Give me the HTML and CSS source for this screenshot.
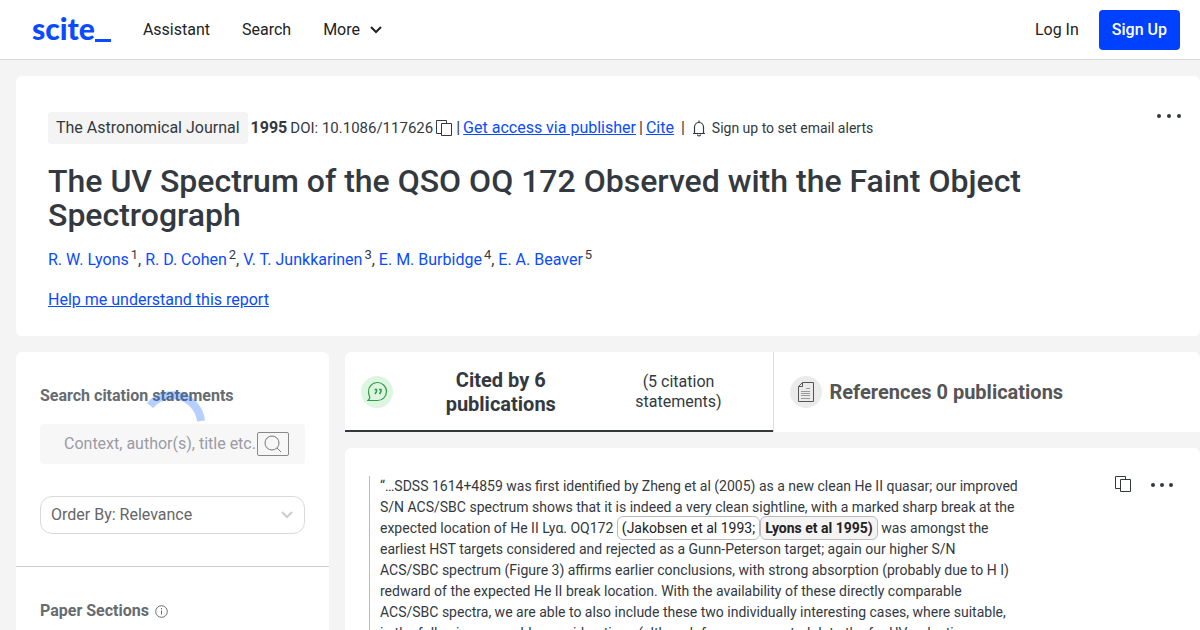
FILE: index.html
```html
<!DOCTYPE html>
<html lang="en">
<head>
    <meta charset="UTF-8">
    <meta name="viewport" content="width=device-width, initial-scale=1.0">
    <title>The UV Spectrum of the QSO OQ 172 Observed with the Faint Object Spectrograph</title>
    <link rel="stylesheet" href="styles.css">
</head>
<body>
    <header class="navbar">
        <a class="logo" href="#">scite<span class="logo-bar"></span></a>
        <nav class="nav-links">
            <a href="#">Assistant</a>
            <a href="#">Search</a>
            <button class="more-button" type="button">More
                <svg width="12" height="8" viewBox="0 0 12 8" fill="none" stroke="currentColor" stroke-width="2"><path d="M1 1l5 5 5-5"/></svg>
            </button>
        </nav>
        <div class="nav-actions">
            <a href="#">Log In</a>
            <a class="signup" href="#">Sign Up</a>
        </div>
    </header>

    <main class="page">
        <section class="card paper">
            <div class="paper-top">
                <div class="meta">
                    <span class="journal">The Astronomical Journal</span>
                    <strong>1995</strong>
                    <span class="doi">DOI: 10.1086/117626</span>
                    <button class="copy-doi" type="button" aria-label="Copy DOI">
                        <svg width="17" height="17" viewBox="0 0 17 17" fill="none" stroke="currentColor"><path d="M5.500 13.500H.5V.5h10v3M5.500 3.500h10v12h-10z"/></svg>
                    </button>
                    <span>|</span>
                    <a class="link publisher" href="#">Get access via publisher</a>
                    <span>|</span>
                    <a class="link cite" href="#">Cite</a>
                    <span>|</span>
                    <button class="alert-button" type="button">
                        <svg width="14" height="17" viewBox="0 0 14 17" fill="none" stroke="currentColor" stroke-width="1.200"><path d="M1 13.500h12M2.500 13.500V7a4.500 4.500 0 0 1 9 0v6.500M7 .5v2"/><path d="M5.500 14.500a1.500 1.500 0 0 0 3 0"/></svg>
                        Sign up to set email alerts
                    </button>
                </div>
                <button class="icon-button" type="button" aria-label="More options">
                    <svg width="26" height="8" viewBox="0 0 26 8" fill="currentColor"><circle cx="3" cy="4" r="2"/><circle cx="13" cy="4" r="2"/><circle cx="23" cy="4" r="2"/></svg>
                </button>
            </div>
            <h1>The UV Spectrum of the QSO OQ 172 Observed with the Faint Object Spectrograph</h1>
            <p class="authors">
                <a href="#">R. W. Lyons</a><sup>1</sup>, <a href="#">R. D. Cohen</a><sup>2</sup>, <a href="#">V. T. Junkkarinen</a><sup>3</sup>, <a href="#">E. M. Burbidge</a><sup>4</sup>, <a href="#">E. A. Beaver</a><sup>5</sup>
            </p>
            <a class="link help" href="#">Help me understand this report</a>
        </section>

        <div class="columns">
            <aside class="card sidebar">
                <div class="filters">
                    <label class="filter-title" for="statement-search">Search citation statements</label>
                    <div class="search-box">
                        <input type="text" id="statement-search" placeholder="Context, author(s), title etc.">
                        <button class="search-button" type="button" aria-label="Search">
                            <svg width="18" height="18" viewBox="0 0 18 18" fill="none" stroke="currentColor"><circle cx="8" cy="8" r="7"/><path d="M13 13l4 4"/></svg>
                        </button>
                    </div>
                    <div class="order-box">
                        <select class="order" aria-label="Order">
                            <option>Order By: Relevance</option>
                            <option>Order By: Recency</option>
                        </select>
                        <svg class="order-arrow" width="12" height="8" viewBox="0 0 12 8" fill="none" stroke="currentColor" stroke-width="2"><path d="M1 1l5 5 5-5"/></svg>
                    </div>
                </div>
                <div class="sections">
                    <h2 class="filter-title">Paper Sections</h2>
                    <svg width="13" height="13" viewBox="0 0 13 13" fill="none" stroke="currentColor"><circle cx="6.500" cy="6.500" r="5.800"/><path d="M6.500 5.500v4M6.500 3v1.300"/></svg>
                </div>
                <svg class="spinner" width="66" height="66" viewBox="0 0 66 66" fill="none" stroke="#0f65ff" stroke-width="8"><path d="M10 15.500A29 29 0 0 1 61 31"/></svg>
            </aside>

            <div class="results">
                <div class="tabs">
                    <button class="tab active" type="button">
                        <svg class="badge green" width="32" height="32" viewBox="0 0 32 32" fill="none" stroke="currentColor" stroke-width="1.200"><path d="M7 24.500h9.500a9 9 0 1 0-9-8.500c0 3 1.300 4.300 1.300 5.500 0 1-.8 2-1.800 3z"/><path stroke-width="1.500" d="M13.500 13.500h2v2l-1.500 2.500M18 13.500h2v2L18.500 18"/></svg>
                        <span class="tab-title">Cited by 6 publications</span>
                        <span class="tab-note">(5 citation statements)</span>
                    </button>
                    <button class="tab" type="button">
                        <svg class="badge grey" width="32" height="32" viewBox="0 0 32 32" fill="none" stroke="currentColor"><path d="M12.500 6.500h11v19h-15v-15zM12.500 6.500v4h-4"/><path stroke="#999" d="M16 12.500h4M11 15.500h9M11 17.500h9M11 19.500h9M11 22.500h9"/></svg>
                        <span class="tab-title">References 0 publications</span>
                    </button>
                </div>

                <article class="card statement">
                    <blockquote>
                        “…SDSS 1614+4859 was first identified by Zheng et al (2005) as a new clean He II quasar; our improved<br>
                        S/N ACS/SBC spectrum shows that it is indeed a very clean sightline, with a marked sharp break at the<br>
                        expected location of He II Lyα. OQ172 <a class="cite-chip" href="#">(Jakobsen et al 1993;</a><a class="cite-chip current" href="#">Lyons et al 1995)</a> was amongst the<br>
                        earliest HST targets considered and rejected as a Gunn-Peterson target; again our higher S/N<br>
                        ACS/SBC spectrum (Figure 3) affirms earlier conclusions, with strong absorption (probably due to H I)<br>
                        redward of the expected He II break location. With the availability of these directly comparable<br>
                        ACS/SBC spectra, we are able to also include these two individually interesting cases, where suitable,<br>
                        in the following ensemble considerations (although for some spectral data the far-UV reduction
                    </blockquote>
                    <div class="statement-actions">
                        <button class="icon-button" type="button" aria-label="Copy statement">
                            <svg width="17" height="17" viewBox="0 0 17 17" fill="none" stroke="currentColor"><path d="M5.500 12.500H.5V.5h10v3M5.500 3.500h10v12h-10z"/></svg>
                        </button>
                        <button class="icon-button" type="button" aria-label="More options">
                            <svg width="24" height="6" viewBox="0 0 24 6" fill="currentColor"><circle cx="3" cy="3" r="2"/><circle cx="12" cy="3" r="2"/><circle cx="21" cy="3" r="2"/></svg>
                        </button>
                    </div>
                </article>
            </div>
        </div>
    </main>
</body>
</html>
```
FILE: styles.css
```css
* {
    box-sizing: border-box;
}
body {
    margin: 0;
    font-family: Roboto, Arial, sans-serif;
    font-size: 16px;
    line-height: 24px;
    color: #33393f;
    background: #f4f4f4;
}
a {
    color: inherit;
    text-decoration: none;
}
button {
    font: inherit;
    color: inherit;
    background: none;
    border: none;
    padding: 0;
    cursor: pointer;
}
svg {
    display: block;
    flex: none;
}
.navbar {
    display: flex;
    align-items: center;
    height: 60px;
    padding: 0 20px 0 32px;
    background: white;
    border-bottom: 1px solid #d9d9d9;
    color: #222;
}
.logo {
    display: flex;
    align-items: flex-end;
    padding-bottom: 4px;
    font-family: Lato, sans-serif;
    font-size: 30px;
    font-weight: 900;
    line-height: 28px;
    color: #0a4bff;
    margin-right: 32px;
}
.logo-bar {
    width: 16px;
    height: 3px;
    background: #0a4bff;
}
.nav-links {
    display: flex;
    gap: 32px;
}
.more-button {
    display: flex;
    align-items: center;
    gap: 10px;
}
.nav-actions {
    display: flex;
    align-items: center;
    gap: 20px;
    margin-left: auto;
}
.signup {
    padding: 8px 13px;
    font-weight: 500;
    color: white;
    background: #0040ff;
    border-radius: 4px;
}
.page {
    padding: 16px 0 16px 16px;
}
.card {
    background: white;
    border-radius: 6px;
}
.paper {
    padding: 36px 18px 24px 32px;
    margin-bottom: 16px;
}
.paper-top {
    display: flex;
    justify-content: space-between;
    align-items: flex-start;
}
.meta {
    display: flex;
    align-items: center;
    gap: 3px;
}
.journal {
    padding: 4px 8px;
    background: #f4f4f4;
    border-radius: 4px;
}
.doi {
    font-size: 15px;
}
.link {
    color: #0a4bff;
    text-decoration: underline;
}
.cite {
    margin-right: 4px;
}
.alert-button {
    display: flex;
    align-items: center;
    gap: 6px;
    margin-left: 4px;
    font-size: 14px;
}
h1 {
    margin: 20px 0 16px;
    font-size: 32px;
    font-weight: 500;
    line-height: 34px;
    max-width: 1020px;
}
.authors {
    margin: 0 0 16px;
}
.authors a {
    color: #0a4bff;
}
.authors sup {
    font-size: 13px;
    line-height: 0;
    margin-left: 2px;
}
.columns {
    display: grid;
    grid-template-columns: 313px 1fr;
    gap: 16px;
}
.sidebar {
    position: relative;
    color: #666c70;
}
.filters {
    display: flex;
    flex-direction: column;
    padding: 32px 24px;
    border-bottom: 1px solid #ccc;
}
.filter-title {
    margin: 0;
    font-size: 16px;
    font-weight: 700;
    line-height: 24px;
}
.search-box {
    display: flex;
    align-items: center;
    height: 40px;
    margin: 16px 0 32px;
    padding: 0 16px 0 24px;
    background: #f7f7f7;
    border-radius: 4px;
}
.search-box input {
    flex: 1;
    min-width: 0;
    padding: 0;
    border: none;
    outline: none;
    background: none;
    font: inherit;
}
.search-box input::placeholder {
    color: #9b9ba5;
}
.search-button {
    display: flex;
    align-items: center;
    justify-content: center;
    width: 32px;
    height: 24px;
    color: #777;
    border: 1px solid #888;
    border-radius: 2px;
}
.order-box {
    display: grid;
    align-items: center;
}
.order {
    grid-area: 1 / 1;
    width: 100%;
    height: 38px;
    padding: 0 10px;
    appearance: none;
    font: inherit;
    color: #666;
    background: white;
    border: 1px solid #d9d9d9;
    border-radius: 12px;
}
.order-arrow {
    grid-area: 1 / 1;
    justify-self: end;
    margin-right: 12px;
    color: #ccc;
    pointer-events: none;
}
.sections {
    display: flex;
    align-items: center;
    gap: 6px;
    padding: 32px 24px;
}
.spinner {
    position: absolute;
    top: 38px;
    left: 124px;
    opacity: 0.3;
    pointer-events: none;
}
.tabs {
    display: grid;
    grid-template-columns: 1fr 1fr;
    height: 80px;
    margin-bottom: 16px;
    background: white;
    border-radius: 6px 6px 0 0;
}
.tab {
    display: flex;
    align-items: center;
    gap: 8px;
    padding: 0 16px;
    color: #555;
    border-left: 1px solid #ddd;
}
.tab.active {
    padding-top: 2px;
    color: #33393f;
    border-left: none;
    border-bottom: 2px solid #33393f;
}
.tab-title {
    font-size: 20px;
    font-weight: 700;
}
.active .tab-title {
    flex: 1;
    padding: 0 32px 0 40px;
}
.tab-note {
    width: 156px;
    padding: 0 24px;
    line-height: 20px;
}
.badge {
    border-radius: 50%;
}
.green {
    color: #2e9e44;
    background: #def5e1;
}
.grey {
    background: #ebebeb;
}
.statement {
    display: flex;
    justify-content: space-between;
    align-items: flex-start;
    padding: 28px 26px 24px 24px;
}
blockquote {
    margin: 0;
    padding-left: 10px;
    font-size: 14px;
    line-height: 21px;
    white-space: nowrap;
    border-left: 1px solid #bbb;
}
.cite-chip {
    padding: 3px 4px;
    color: #222;
    border: 1px solid #bbb;
    border-radius: 6px;
}
.current {
    font-weight: 700;
    background: #f4f4f4;
}
.statement-actions {
    display: flex;
    align-items: center;
    gap: 18px;
}
```
